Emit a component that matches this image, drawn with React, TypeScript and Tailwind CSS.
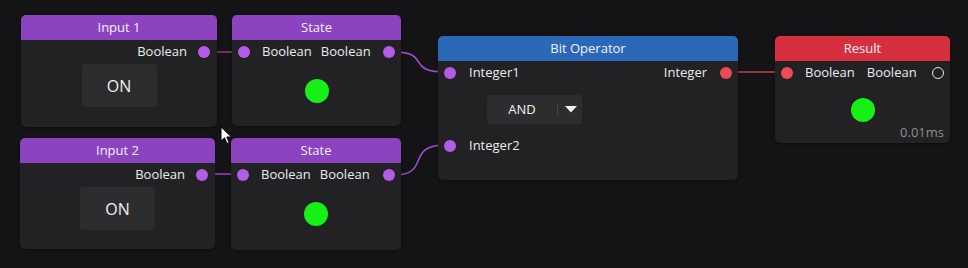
import React from "react";

type NodeProps = {
    title: string;
    header: string;
    className: string;
    children?: React.ReactNode;
};

const Node = ({ title, header, className, children }: NodeProps) => (
    <div className={`absolute flex flex-col rounded-[5px] bg-[#222224] shadow-[0_1px_3px_rgba(0,0,0,0.4)] ${className}`}>
        <div
            className={`flex h-[25px] shrink-0 items-center justify-center rounded-t-[5px] pt-px text-[13px] font-medium text-[#f4f0f8] ${header}`}
        >
            {title}
        </div>
        <div className="relative flex grow flex-col">{children}</div>
    </div>
);

const Pin = ({ color = "bg-[#b35ce6]" }: { color?: string }) => (
    <span className={`block h-[12px] w-[12px] shrink-0 rounded-full ${color}`} />
);

const HollowPin = () => <span className="block h-[12px] w-[12px] shrink-0 rounded-full border-[1.5px] border-[#e8e8e8]" />;

const Lamp = () => <span className="block h-[24px] w-[24px] rounded-full bg-[#17f017]" />;

const OnButton = () => (
    <div className="flex h-[43px] w-[75px] items-center justify-center rounded-[4px] bg-[#2d2d2f] text-[16px] font-medium text-[#f2f2f2]">
        ON
    </div>
);

const InputNode = ({ title, className }: { title: string; className: string }) => (
    <Node title={title} header="bg-[#8b43c0]" className={className}>
        <div className="flex h-[24px] items-center justify-end gap-[11px] pr-[7px] text-[13px] font-medium text-[#ececec]">
            <span>Boolean</span>
            <Pin />
        </div>
        <div className="flex justify-center">
            <OnButton />
        </div>
    </Node>
);

const StateNode = ({ className }: { className: string }) => (
    <Node title="State" header="bg-[#8b43c0]" className={className}>
        <div className="flex h-[24px] items-center px-[6px] text-[13px] font-medium text-[#ececec]">
            <Pin />
            <span className="ml-[12px]">Boolean</span>
            <span className="ml-[9px]">Boolean</span>
            <span className="grow" />
            <Pin />
        </div>
        <div className="mt-[15px] flex justify-center">
            <Lamp />
        </div>
    </Node>
);

const Cursor = () => (
    <svg className="absolute left-[220px] top-[126px]" width="13" height="20" viewBox="0 0 13 20">
        <path d="M1 1 L1 15 L4.5 11.8 L7 17.5 L9.2 16.5 L6.8 11 L11.5 11 Z" fill="#ffffff" stroke="#000000" strokeWidth="1" strokeLinejoin="round" />
    </svg>
);

export default function App() {
    return (
        <div className="relative h-[268px] w-[968px] overflow-hidden bg-[#141417] font-['Open_Sans',sans-serif]">
            <svg className="pointer-events-none absolute inset-0" width="968" height="268">
                <path d="M209 52 L239 52" stroke="#8e3a78" strokeWidth="1.5" fill="none" />
                <path d="M209 174 L238 174" stroke="#9444c4" strokeWidth="1.5" fill="none" />
                <path d="M394 52 C432 52, 404 72, 446 72" stroke="#a04ed6" strokeWidth="1.5" fill="none" />
                <path d="M394 175 C432 175, 404 145, 446 145" stroke="#a04ed6" strokeWidth="1.5" fill="none" />
                <path d="M731 72 L783 72" stroke="#c23f52" strokeWidth="1.5" fill="none" />
            </svg>

            <InputNode title="Input 1" className="left-[21px] top-[15px] h-[112px] w-[196px]" />
            <StateNode className="left-[232px] top-[15px] h-[111px] w-[169px]" />
            <InputNode title="Input 2" className="left-[20px] top-[138px] h-[111px] w-[195px]" />
            <StateNode className="left-[231px] top-[138px] h-[112px] w-[170px]" />

            <Node title="Bit Operator" header="bg-[#2c68b8]" className="left-[438px] top-[36px] h-[144px] w-[300px]">
                <div className="flex h-[24px] items-center px-[6px] text-[13px] font-medium text-[#ececec]">
                    <Pin />
                    <span className="ml-[13px]">Integer1</span>
                    <span className="grow" />
                    <span className="mr-[13px]">Integer</span>
                    <Pin color="bg-[#f04a56]" />
                </div>
                <div className="mt-[10px] pl-[49px]">
                    <div className="flex h-[29px] w-[95px] items-center rounded-[3px] bg-[#2d2d2f] text-[13px] font-medium text-[#f2f2f2]">
                        <span className="w-[70px] text-center">AND</span>
                        <span className="h-[10px] w-px bg-[#4a4a4c]" />
                        <svg className="ml-[7px]" width="12" height="7" viewBox="0 0 12 7">
                            <path d="M0 0 L12 0 L6 6.5 Z" fill="#f2f2f2" />
                        </svg>
                    </div>
                </div>
                <div className="mt-[10px] flex h-[24px] items-center px-[6px] text-[13px] font-medium text-[#ececec]">
                    <Pin />
                    <span className="ml-[13px]">Integer2</span>
                </div>
            </Node>

            <Node title="Result" header="bg-[#d6303f]" className="left-[775px] top-[36px] h-[107px] w-[175px]">
                <div className="flex h-[24px] items-center px-[6px] text-[13px] font-medium text-[#ececec]">
                    <Pin color="bg-[#f04a56]" />
                    <span className="ml-[12px]">Boolean</span>
                    <span className="ml-[12px]">Boolean</span>
                    <span className="grow" />
                    <HollowPin />
                </div>
                <div className="mt-[13px] flex justify-center">
                    <Lamp />
                </div>
                <div className="mt-[2px] pr-[6px] text-right text-[13px] leading-[16px] text-[#8e8e90]">0.01ms</div>
            </Node>

            <Cursor />
        </div>
    );
}
